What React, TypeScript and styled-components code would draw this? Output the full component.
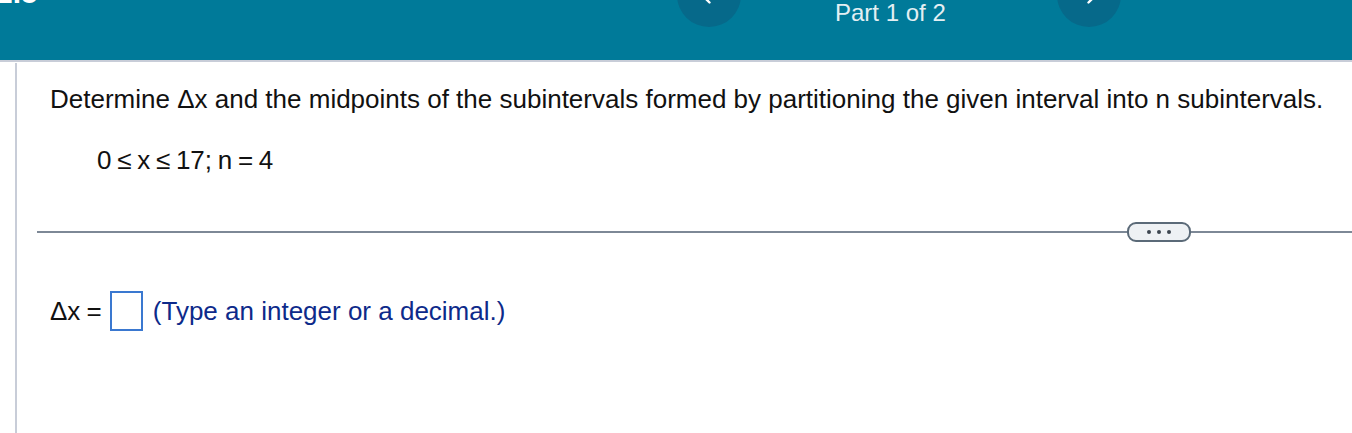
import React from "react";
import styled, { createGlobalStyle } from "styled-components";

const GlobalStyle = createGlobalStyle`
  html, body {
    margin: 0;
    padding: 0;
    background: #ffffff;
    font-family: "Liberation Sans", Arial, sans-serif;
  }
`;

const Page = styled.div`
  width: 1352px;
  height: 433px;
  overflow: hidden;
  background: #ffffff;
`;

const Header = styled.header`
  height: 60px;
  background: #007a99;
  border-bottom: 2px solid #c8cdd8;
  display: flex;
  align-items: flex-start;
  overflow: hidden;
`;

const SectionTitle = styled.div`
  width: 681px;
  margin-top: -22px;
  margin-left: -4px;
  font-size: 30px;
  font-weight: bold;
  color: #ffffff;
  line-height: 30px;
`;

const NavButton = styled.div`
  width: 64px;
  height: 64px;
  margin-top: -37px;
  border-radius: 50%;
  background: #06698a;
  display: flex;
  align-items: flex-end;
  justify-content: center;
  flex-shrink: 0;
`;

const Chevron = styled.svg`
  margin-bottom: 23px;
  overflow: visible;
`;

const PartLabel = styled.div`
  width: 316px;
  padding-left: 94px;
  box-sizing: border-box;
  margin-top: 1px;
  font-size: 24px;
  line-height: 24px;
  color: #e4eff3;
`;

const Body = styled.main`
  margin-left: 15px;
  margin-top: 1px;
  border-left: 2px solid #c8cdd8;
  height: 380px;
`;

const Question = styled.p`
  margin: 0;
  padding: 21px 0 0 33px;
  font-size: 26px;
  line-height: 30px;
  color: #111111;
  white-space: nowrap;
`;

const Interval = styled.p`
  margin: 0;
  padding: 31px 0 0 80px;
  font-size: 26px;
  line-height: 30px;
  color: #111111;
  word-spacing: -1.5px;
`;

const Divider = styled.div`
  margin: 48px 0 0 20px;
  height: 18px;
  display: flex;
  align-items: center;
`;

const Rule = styled.div<{ $grow?: boolean }>`
  height: 2px;
  background: #7d8896;
  width: ${(p) => (p.$grow ? "auto" : "1090px")};
  flex: ${(p) => (p.$grow ? 1 : "none")};
`;

const MoreButton = styled.div`
  width: 60px;
  height: 16px;
  border: 2px solid #5b6a78;
  border-radius: 9px;
  background: #eef1f4;
  display: flex;
  align-items: center;
  justify-content: center;
  gap: 6px;
  flex-shrink: 0;
`;

const Dot = styled.span`
  width: 4px;
  height: 4px;
  border-radius: 50%;
  background: #3d4650;
`;

const AnswerRow = styled.div`
  display: flex;
  align-items: center;
  padding: 50px 0 0 33px;
  font-size: 26px;
  line-height: 30px;
  color: #111111;
  word-spacing: -1px;
`;

const AnswerBox = styled.div`
  width: 29px;
  height: 36px;
  border: 2px solid #3a78d0;
  margin: 0 10px 0 8px;
`;

const Hint = styled.span`
  color: #0d2a8a;
  word-spacing: 0;
`;

export default function App() {
  return (
    <>
      <GlobalStyle />
      <Page>
        <Header>
          <SectionTitle>2.5</SectionTitle>
          <NavButton>
            <Chevron width="10" height="10" viewBox="0 0 10 10">
              <path d="M9 0 L3 6 L5.5 8.5" stroke="#ffffff" strokeWidth="2.4" fill="none" strokeLinecap="round" />
            </Chevron>
          </NavButton>
          <PartLabel>Part 1 of 2</PartLabel>
          <NavButton>
            <Chevron width="10" height="10" viewBox="0 0 10 10">
              <path d="M1 0 L7 6 L4.5 8.5" stroke="#ffffff" strokeWidth="2.4" fill="none" strokeLinecap="round" />
            </Chevron>
          </NavButton>
        </Header>
        <Body>
          <Question>
            Determine Δx and the midpoints of the subintervals formed by partitioning the given interval into n subintervals.
          </Question>
          <Interval>0 ≤ x ≤ 17; n = 4</Interval>
          <Divider>
            <Rule />
            <MoreButton>
              <Dot />
              <Dot />
              <Dot />
            </MoreButton>
            <Rule $grow />
          </Divider>
          <AnswerRow>
            <span>Δx =</span>
            <AnswerBox />
            <Hint>(Type an integer or a decimal.)</Hint>
          </AnswerRow>
        </Body>
      </Page>
    </>
  );
}
